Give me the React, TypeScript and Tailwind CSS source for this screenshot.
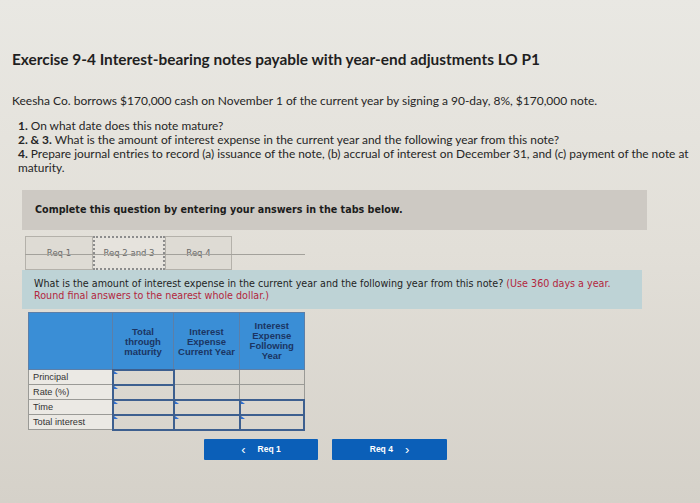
import React from 'react'

const sans = { fontFamily: 'Lato, "Liberation Sans", sans-serif' }
const arial = { fontFamily: '"Liberation Sans", Arial, sans-serif' }

function InputCell() {
  return (
    <td className="relative border-2 border-[#3d5f8f] p-0">
      <span className="absolute left-0 top-0 h-0 w-0 border-l-[4px] border-t-[3px] border-l-[#2f6fd0] border-t-transparent" />
      <div className="h-[11px]" />
    </td>
  )
}

function PlainCell() {
  return <td className="border border-[#9a9a96] p-0"><div className="h-[13px]" /></td>
}

export default function App() {
  const rows = [
    { label: 'Principal', inputs: [true, false, false] },
    { label: 'Rate (%)', inputs: [true, false, false] },
    { label: 'Time', inputs: [true, true, true] },
    { label: 'Total interest', inputs: [true, true, true] },
  ]

  return (
    <div className="h-[503px] w-[700px] overflow-hidden bg-gradient-to-b from-[#e9e8e3] via-[#e2dfd8] to-[#d5d1c9] text-[#262626]">
      {/* Heading + prompt */}
      <div className="pl-3 pr-1 pt-[49px]" style={sans}>
        <h1 className="text-[15.4px] font-bold leading-5 text-[#1f1f1f]">
          Exercise 9-4 Interest-bearing notes payable with year-end adjustments LO P1
        </h1>
        <p className="mt-[24px] text-[12px] leading-4">
          Keesha Co. borrows $170,000 cash on November 1 of the current year by signing a 90-day, 8%, $170,000 note.
        </p>
        <div className="mt-[10px] pl-[6px] text-[11.9px] leading-[14px]">
          <p><b>1.</b> On what date does this note mature?</p>
          <p><b>2. &amp; 3.</b> What is the amount of interest expense in the current year and the following year from this note?</p>
          <p><b>4.</b> Prepare journal entries to record (a) issuance of the note, (b) accrual of interest on December 31, and (c) payment of the note at maturity.</p>
        </div>
      </div>

      <div className="ml-[22px] mr-[53px] mt-[15px]" style={{ fontFamily: '"DejaVu Sans", Verdana, sans-serif' }}>
        {/* Instruction banner */}
        <div className="flex h-[40px] items-center bg-[#cdc9c3] pl-[13px] text-[9.6px] font-bold text-[#1c1c1c]">
          Complete this question by entering your answers in the tabs below.
        </div>

        {/* Tabs */}
        <div className="relative mt-[6px] flex h-[34px] pl-[3px]">
          <div className="flex w-[68px] items-center justify-center border border-[#b4b1aa] bg-[#dedbd4] text-[8.5px] text-[#6a6a6a]">Req 1</div>
          <div className="flex w-[72px] items-center justify-center border-2 border-dotted border-[#8c8c8c] bg-[#e6e3dd] text-[8.5px] text-[#6a6a6a]">Req 2 and 3</div>
          <div className="flex w-[67px] items-center justify-center border border-[#b4b1aa] bg-[#dedbd4] text-[8.5px] text-[#6a6a6a]">Req 4</div>
          <div className="pointer-events-none absolute left-[3px] top-[18px] h-px w-[280px] bg-[#a3a19b]" />
        </div>

        {/* Question */}
        <div className="mr-[5px] bg-[#bed3d6] px-[12px] pb-[7px] pt-[8px] text-[9.6px] leading-[12px] text-[#1f1f1f]">
          What is the amount of interest expense in the current year and the following year from this note?{' '}
          <span className="text-[#b3263d]">(Use 360 days a year. Round final answers to the nearest whole dollar.)</span>
        </div>

        {/* Table */}
        <table className="ml-[6px] mt-[3px] w-[277px] border-collapse" style={arial}>
          <thead>
            <tr className="h-[57px] bg-[#3a8ed6] text-center text-[9.5px] font-bold leading-[10px] text-[#1b3563]">
              <th className="w-[84px] border border-[#5c7fa8]" />
              <th className="w-[61px] border border-[#5c7fa8] pt-[2px]">Total<br />through<br />maturity</th>
              <th className="w-[66px] border border-[#5c7fa8] pt-[2px]">Interest<br />Expense<br />Current Year</th>
              <th className="border border-[#5c7fa8]">Interest<br />Expense<br />Following<br />Year</th>
            </tr>
          </thead>
          <tbody>
            {rows.map((r) => (
              <tr key={r.label} className="h-[15px]">
                <td className="border border-[#9a9a96] bg-[#ebe9e4] pl-[4px] text-[9.2px] leading-[13px] text-[#333]">{r.label}</td>
                {r.inputs.map((inp, i) => (inp ? <InputCell key={i} /> : <PlainCell key={i} />))}
              </tr>
            ))}
          </tbody>
        </table>

        {/* Nav buttons */}
        <div className="ml-[182px] mt-[8px] flex gap-[14px]" style={arial}>
          <button className="flex h-[21px] w-[114px] items-center justify-center gap-[12px] rounded-[1px] bg-[#0b5fb8] text-[8.5px] font-bold text-white">
            <span className="text-[13px] font-normal leading-none">‹</span>
            <span>Req 1</span>
          </button>
          <button className="flex h-[21px] w-[115px] items-center justify-center gap-[12px] rounded-[1px] bg-[#0b5fb8] text-[8.5px] font-bold text-white">
            <span>Req 4</span>
            <span className="text-[13px] font-normal leading-none">›</span>
          </button>
        </div>
      </div>
    </div>
  )
}
